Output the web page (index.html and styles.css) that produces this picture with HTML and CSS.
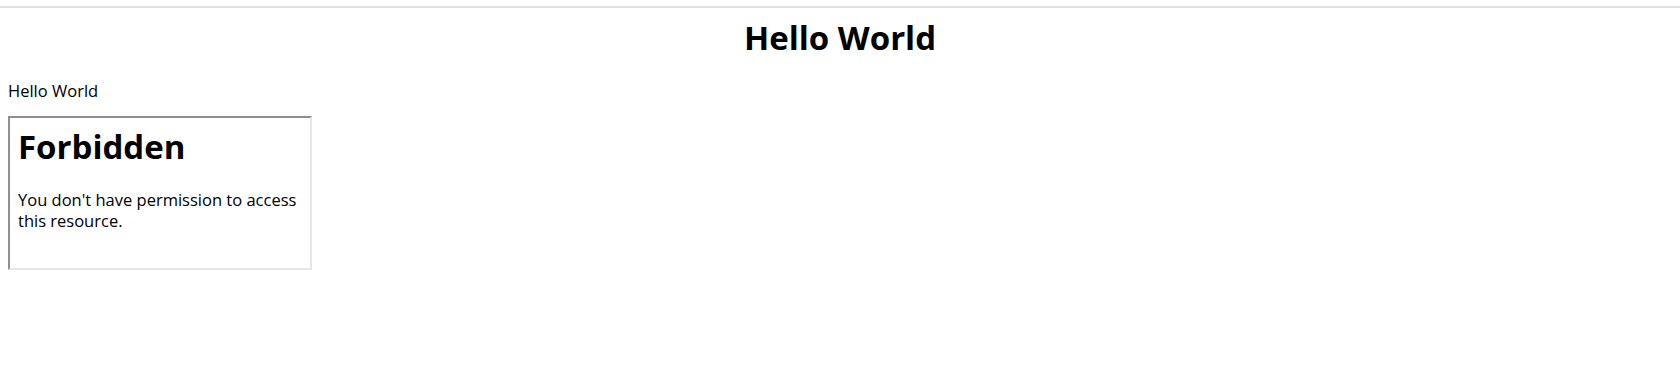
FILE: index.html
```html
<!DOCTYPE html>
<html lang="en">
<head>
    <meta charset="UTF-8">
    <title>Hello World</title>
    <link rel="stylesheet" href="styles.css">
</head>
<body>
    <div class="top-rule"></div>
    <div class="page">
        <h1 class="page-title">Hello World</h1>
        <p class="greeting">Hello World</p>

        <div class="frame">
            <h1 class="frame-title">Forbidden</h1>
            <p class="frame-text">You don't have permission to access this resource.</p>
        </div>
    </div>
</body>
</html>
```

FILE: styles.css
```css
body {
    margin: 0;
    font-family: "Open Sans", "Noto Sans", sans-serif;
    color: #000;
    background: #fff;
}

.top-rule {
    margin-top: 6px;
    border-top: 2px solid #e0e0e0;
}

.page {
    padding: 0 8px;
}

.page-title {
    margin: 8px 0 0;
    font-size: 33px;
    font-weight: 700;
    line-height: 43px;
    text-align: center;
}

.greeting {
    margin: 21px 0 0;
    font-size: 16.5px;
    line-height: 21px;
}

.frame {
    box-sizing: border-box;
    width: 304px;
    height: 154px;
    margin-top: 15px;
    padding: 10px 8px 0;
    border: 2px solid;
    border-color: #8f8f8f #e6e6e6 #e6e6e6 #8f8f8f;
}

.frame-title {
    margin: 0;
    font-size: 33px;
    font-weight: 700;
    line-height: 38px;
}

.frame-text {
    margin: 23px 0 0;
    font-size: 16.5px;
    line-height: 21px;
}
```
